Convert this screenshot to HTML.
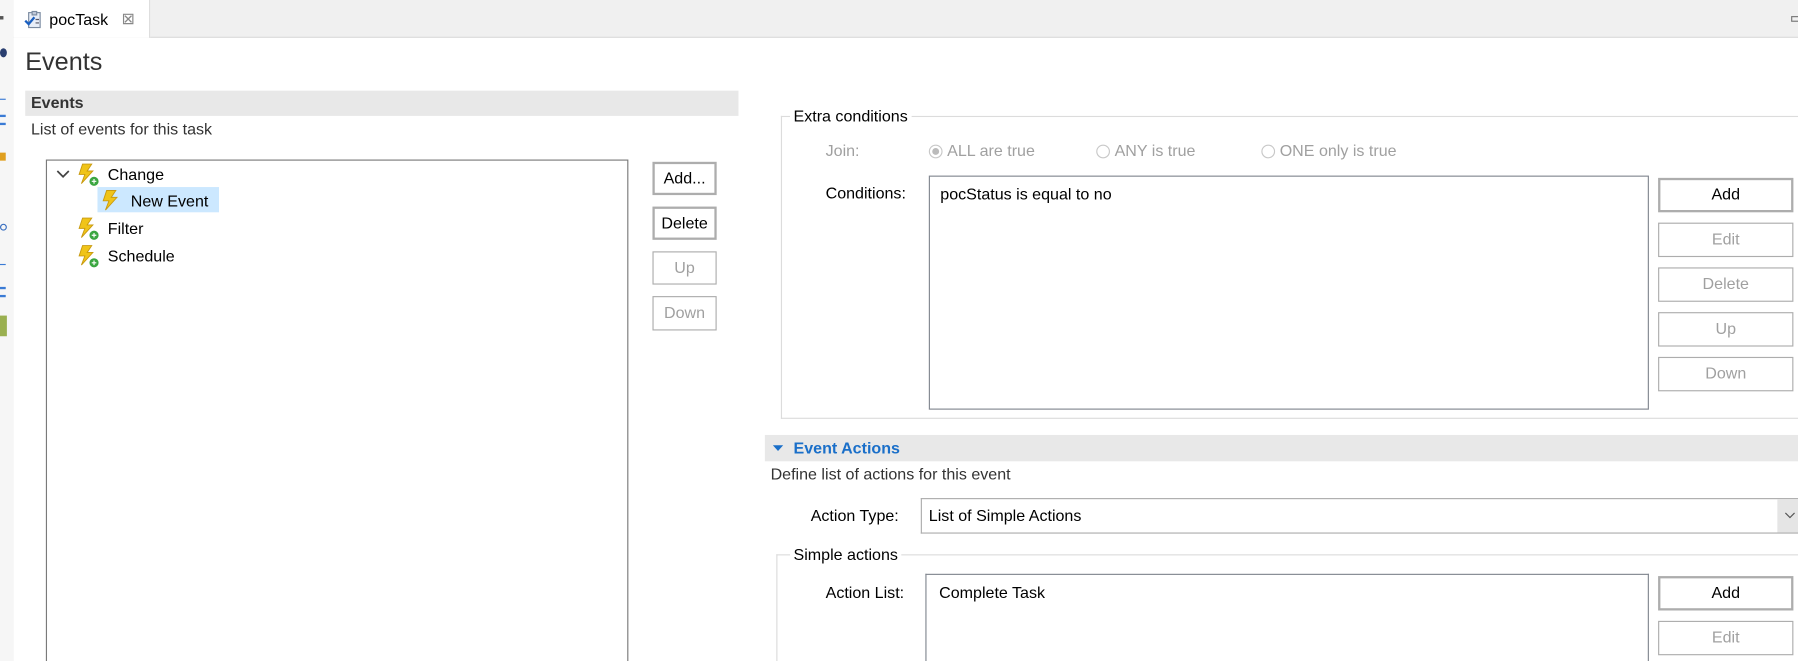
<!DOCTYPE html>
<html><head><meta charset="utf-8"><style>
html,body{margin:0;padding:0;width:1798px;height:661px;overflow:hidden;background:#fff}
#w{position:absolute;left:0;top:0;width:1568px;height:576px;overflow:hidden;transform:scale(1.14668,1.14757);transform-origin:0 0;font-family:"Liberation Sans",sans-serif;font-size:14px;color:#000}
.a{position:absolute;white-space:nowrap}
.t{line-height:18px}
.btn{position:absolute;border:1px solid #adadad;background:#fff;text-align:center;line-height:27px;color:#a0a0a0;box-sizing:border-box}
.btn.on{border:2px solid #adadad;color:#000;line-height:25px}
.box{position:absolute;border:1px solid #828790;background:#fff;box-sizing:border-box}
.grp{position:absolute;border:1px solid #dcdcdc;box-sizing:border-box}
.lg{position:absolute;background:#fff;padding:0 3px;line-height:18px}
.rad{display:inline-block;width:12px;height:12px;border:1px solid #c8c8c8;border-radius:50%;vertical-align:-2px;margin-right:4px;box-sizing:border-box;position:relative}
</style></head><body><div id="w">
<div class="a" style="left:0;top:0;width:12px;height:576px;background:#f6f6f6"></div>
<div class="a" style="left:0;top:14px;width:3px;height:3px;background:#555"></div>
<div class="a" style="left:0;top:42px;width:6px;height:8px;background:#2a3f70;border-radius:50%"></div>
<div class="a" style="left:0;top:86px;width:5px;height:1px;background:#3a7bd5"></div>
<div class="a" style="left:0;top:100px;width:5px;height:9px;border-top:2px solid #3a7bd5;border-bottom:2px solid #3a7bd5;box-sizing:border-box"></div>
<div class="a" style="left:0;top:133px;width:5px;height:7px;background:#e0a020"></div>
<div class="a" style="left:0;top:195px;width:6px;height:6px;border:1px solid #3a6fc0;border-radius:50%;box-sizing:border-box"></div>
<div class="a" style="left:0;top:230px;width:5px;height:1px;background:#3a7bd5"></div>
<div class="a" style="left:0;top:250px;width:5px;height:9px;border-top:2px solid #3a7bd5;border-bottom:2px solid #3a7bd5;box-sizing:border-box"></div>
<div class="a" style="left:0;top:275px;width:6px;height:18px;background:#9ab050"></div>
<div class="a" style="left:12px;top:0;width:1556px;height:32px;background:#f0f0f0;border-bottom:1px solid #dcdcdc"></div>
<div class="a" style="left:12px;top:0;width:118px;height:33px;background:#fff;border-right:1px solid #dcdcdc"></div>
<svg class="a" style="left:21px;top:9px" width="16" height="16" viewBox="0 0 16 16"><rect x="4" y="2" width="10" height="13" fill="#e8eef8" stroke="#7a8aa0"/><rect x="7" y="1" width="4" height="3" fill="#c0c8d8" stroke="#7a8aa0"/><path d="M1 9l3 3 5-6" fill="none" stroke="#1a5fc0" stroke-width="2"/><path d="M10 8h3M10 11h3" stroke="#556"/></svg>
<div class="a t" style="left:43px;top:8px;font-size:14px">pocTask</div>
<div class="a t" style="left:106px;top:7px;color:#888;font-size:14px">⊠</div>
<div class="a" style="left:1562px;top:14px;width:6px;height:3px;border:1px solid #777"></div>
<div class="a" style="left:22px;top:41px;font-size:22px;color:#333">Events</div>
<div class="a" style="left:22px;top:79px;width:622px;height:22px;background:#e8e8e8"></div>
<div class="a t" style="left:27px;top:80px;font-weight:bold;color:#333">Events</div>
<div class="a t" style="left:27px;top:103px;color:#333">List of events for this task</div>
<div class="box" style="left:40px;top:139px;width:508px;height:438px;border-color:#7a7a7a"></div>
<svg class="a" style="left:49px;top:147px" width="12" height="10"><path d="M1 2l5 5 5-5" fill="none" stroke="#444" stroke-width="1.5"/></svg>
<div class="a" style="left:85px;top:163px;width:106px;height:22px;background:#cce8ff"></div>
<svg width="0" height="0" style="position:absolute"><defs><g id="bolt"><path d="M6 1h8l-4 6h5L5 18l3-8H3z" fill="#f0c419" stroke="#c89a10" stroke-width=".8"/></g></defs></svg>
<svg class="a" style="left:66px;top:142px" width="22" height="22"><use href="#bolt"/><circle cx="16" cy="16" r="4.5" fill="#3aa640" stroke="#fff"/><path d="M14 16h4M16 14v4" stroke="#fff"/></svg>
<div class="a t" style="left:94px;top:143px">Change</div>
<svg class="a" style="left:87px;top:165px" width="20" height="20"><use href="#bolt"/></svg>
<div class="a t" style="left:114px;top:166px">New Event</div>
<svg class="a" style="left:66px;top:189px" width="22" height="22"><use href="#bolt"/><circle cx="16" cy="16" r="4.5" fill="#3aa640" stroke="#fff"/><path d="M14 16h4M16 14v4" stroke="#fff"/></svg>
<div class="a t" style="left:94px;top:190px">Filter</div>
<svg class="a" style="left:66px;top:213px" width="22" height="22"><use href="#bolt"/><circle cx="16" cy="16" r="4.5" fill="#3aa640" stroke="#fff"/><path d="M14 16h4M16 14v4" stroke="#fff"/></svg>
<div class="a t" style="left:94px;top:214px">Schedule</div>
<div class="btn on" style="left:569px;top:141px;width:56px;height:29px">Add...</div>
<div class="btn on" style="left:569px;top:180px;width:56px;height:29px">Delete</div>
<div class="btn" style="left:569px;top:219px;width:56px;height:29px">Up</div>
<div class="btn" style="left:569px;top:258px;width:56px;height:30px">Down</div>
<div class="grp" style="left:681px;top:101px;width:888px;height:264px;border-right:none"></div>
<div class="lg" style="left:689px;top:92px">Extra conditions</div>
<div class="a t" style="left:720px;top:122px;color:#a0a0a0">Join:</div>
<div class="a t" style="left:810px;top:122px;color:#a0a0a0"><span class="rad"><span style="position:absolute;left:2px;top:2px;width:6px;height:6px;border-radius:50%;background:#bbb"></span></span>ALL are true</div>
<div class="a t" style="left:956px;top:122px;color:#a0a0a0"><span class="rad"></span>ANY is true</div>
<div class="a t" style="left:1100px;top:122px;color:#a0a0a0"><span class="rad"></span>ONE only is true</div>
<div class="a t" style="left:720px;top:159px">Conditions:</div>
<div class="box" style="left:810px;top:153px;width:628px;height:204px"></div>
<div class="a t" style="left:820px;top:160px">pocStatus is equal to no</div>
<div class="btn on" style="left:1446px;top:155px;width:118px;height:30px">Add</div>
<div class="btn" style="left:1446px;top:194px;width:118px;height:30px">Edit</div>
<div class="btn" style="left:1446px;top:233px;width:118px;height:30px">Delete</div>
<div class="btn" style="left:1446px;top:272px;width:118px;height:30px">Up</div>
<div class="btn" style="left:1446px;top:311px;width:118px;height:30px">Down</div>
<div class="a" style="left:667px;top:379px;width:901px;height:23px;background:#e8e8e8"></div>
<svg class="a" style="left:674px;top:387px" width="10" height="8"><path d="M0 1h9l-4.5 5z" fill="#1a6fc9"/></svg>
<div class="a t" style="left:692px;top:381px;font-weight:bold;color:#1a6fc9">Event Actions</div>
<div class="a t" style="left:672px;top:404px;color:#333">Define list of actions for this event</div>
<div class="a t" style="left:707px;top:440px">Action Type:</div>
<div class="box" style="left:803px;top:434px;width:765px;height:31px;border-color:#adadad;border-right:none"></div>
<div class="a" style="left:1550px;top:435px;width:18px;height:29px;background:#e5e5e5"></div>
<svg class="a" style="left:1556px;top:446px" width="10" height="6"><path d="M1 1l4 4 4-4" fill="none" stroke="#555"/></svg>
<div class="a t" style="left:810px;top:440px">List of Simple Actions</div>
<div class="grp" style="left:677px;top:483px;width:891px;height:94px;border-right:none;border-bottom:none"></div>
<div class="lg" style="left:689px;top:474px">Simple actions</div>
<div class="a t" style="left:720px;top:507px">Action List:</div>
<div class="box" style="left:807px;top:500px;width:631px;height:76px;border-bottom:none"></div>
<div class="a t" style="left:819px;top:507px">Complete Task</div>
<div class="btn on" style="left:1446px;top:502px;width:118px;height:30px">Add</div>
<div class="btn" style="left:1446px;top:541px;width:118px;height:30px">Edit</div>
</div></body></html>
